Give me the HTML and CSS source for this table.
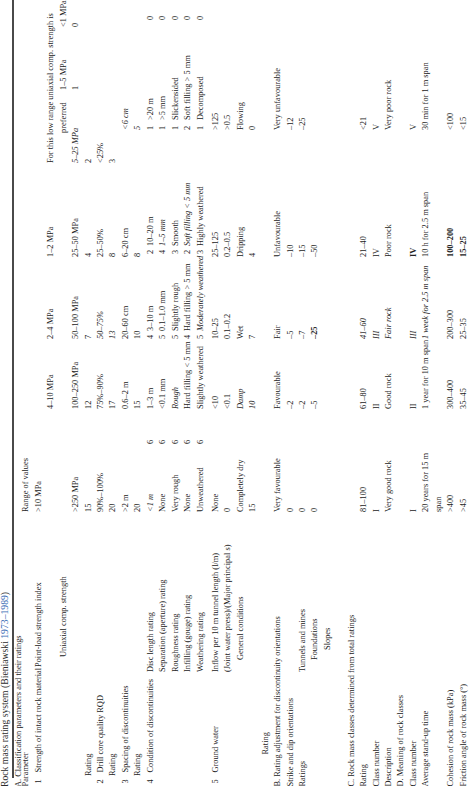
FILE: index.html
```html
<!DOCTYPE html>
<html lang="en">
<head>
<meta charset="utf-8">
<title>Rock mass rating system</title>
<link rel="stylesheet" href="styles.css">
</head>
<body>
<div class="page">
  <div class="title">Rock mass rating system (Bieniawski <span class="cite">1973–1989</span>)</div>
  <div class="rule"></div>
  <div class="sec-a">A. Classification parameters and their ratings</div>
  <div class="rows">
    <div class="row"><span class="lab">Parameter</span><span class="c1">Range of values</span></div>
    <div class="row"><span class="num">1</span><span class="par">Strength of intact rock material</span><span class="sub pl">Point-load strength index</span><span class="c1">&gt;10 MPa</span></div>
    <div class="row"><span class="c2">4–10 MPa</span><span class="c3">2–4 MPa</span><span class="c4">1–2 MPa</span><span class="c5">For this low range uniaxial comp. strength is</span></div>
    <div class="row"><span class="sub uni">Uniaxial comp. strength</span><span class="c5b pref">preferred</span><span class="c6">1–5 MPa</span><span class="c7">&lt;1 MPa</span></div>
    <div class="row"><span class="c1">&gt;250 MPa</span><span class="c2">100–250 MPa</span><span class="c3">50–100 MPa</span><span class="c4">25–50 MPa</span><span class="c5"><i>5–25 MPa</i></span><span class="c6">1</span><span class="c7">0</span></div>
    <div class="row"><span class="lab ind">Rating</span><span class="c1">15</span><span class="c2">12</span><span class="c3">7</span><span class="c4">4</span><span class="c5">2</span></div>
    <div class="row"><span class="num">2</span><span class="par">Drill core quality RQD</span><span class="c1">90%–100%</span><span class="c2">75%–90%</span><span class="c3"><i>50–75%</i></span><span class="c4">25–50%</span><span class="c5">&lt;25%</span></div>
    <div class="row"><span class="lab ind">Rating</span><span class="c1">20</span><span class="c2">17</span><span class="c3"><i>13</i></span><span class="c4">8</span><span class="c5">3</span></div>
    <div class="row"><span class="num">3</span><span class="par">Spacing of discontinuities</span><span class="c1">&gt;2 m</span><span class="c2">0.6–2 m</span><span class="c3">20–60 cm</span><span class="c4">6–20 cm</span><span class="c5b"><i>&lt;6 cm</i></span></div>
    <div class="row"><span class="lab ind">Rating</span><span class="c1">20</span><span class="c2">15</span><span class="c3">10</span><span class="c4">8</span><span class="c5b"><i>5</i></span></div>
    <div class="row cond"><span class="num">4</span><span class="par">Condition of discontinuities</span><span class="sub">Disc length rating</span><span class="c1"><i>&lt;1 m</i></span><span class="r1">6</span><span class="c2">1–3 m</span><span class="c3"><span class="rt">4</span>3–10 m</span><span class="c4"><span class="rt">2</span>10–20 m</span><span class="c5b"><span class="rt">1</span>&gt;20 m</span><span class="c7">0</span></div>
    <div class="row cond"><span class="sub">Separation (aperture) rating</span><span class="c1">None</span><span class="r1">6</span><span class="c2">&lt;0.1 mm</span><span class="c3"><span class="rt">5</span>0.1–1.0 mm</span><span class="c4"><span class="rt">4</span><i>1–5 mm</i></span><span class="c5b"><span class="rt">1</span>&gt;5 mm</span><span class="c7">0</span></div>
    <div class="row cond"><span class="sub">Roughness rating</span><span class="c1">Very rough</span><span class="r1">6</span><span class="c2"><i>Rough</i></span><span class="c3"><span class="rt">5</span>Slightly rough</span><span class="c4"><span class="rt">3</span>Smooth</span><span class="c5b"><span class="rt">1</span>Slickensided</span><span class="c7">0</span></div>
    <div class="row cond"><span class="sub">Infilling (gouge) rating</span><span class="c1">None</span><span class="r1">6</span><span class="c2">Hard filling &lt; 5 mm</span><span class="c3"><span class="rt">4</span>Hard filling &gt; 5 mm</span><span class="c4"><span class="rt">2</span><i>Soft filling &lt; 5 mm</i></span><span class="c5b"><span class="rt">2</span>Soft filling &gt; 5 mm</span><span class="c7">0</span></div>
    <div class="row cond"><span class="sub">Weathering rating</span><span class="c1">Unweathered</span><span class="r1">6</span><span class="c2">Slightly weathered</span><span class="c3"><span class="rt">5</span><i>Moderately weathered</i></span><span class="c4"><span class="rt">3</span>Highly weathered</span><span class="c5b"><span class="rt">1</span>Decomposed</span><span class="c7">0</span></div>
    <div class="row group"><span class="num">5</span><span class="par">Ground water</span><span class="sub">Inflow per 10 m tunnel length (l/m)</span><span class="c1">None</span><span class="c2">&lt;10</span><span class="c3">10–25</span><span class="c4">25–125</span><span class="c5b">&gt;125</span></div>
    <div class="row"><span class="sub">(Joint water press)/(Major principal s)</span><span class="c1">0</span><span class="c2">&lt;0.1</span><span class="c3">0.1–0.2</span><span class="c4">0.2–0.5</span><span class="c5b">&gt;0.5</span></div>
    <div class="row"><span class="sub gen">General conditions</span><span class="c1">Completely dry</span><span class="c2"><i>Damp</i></span><span class="c3">Wet</span><span class="c4">Dripping</span><span class="c5b">Flowing</span></div>
    <div class="row"><span class="c1">15</span><span class="c2"><i>10</i></span><span class="c3">7</span><span class="c4">4</span><span class="c5b">0</span></div>
    <div class="row"><span class="lab ind2">Rating</span></div>
    <div class="row"><span class="lab">B. Rating adjustment for discontinuity orientations</span><span class="c1">Very favourable</span><span class="c2">Favourable</span><span class="c3">Fair</span><span class="c4">Unfavourable</span><span class="c5b">Very unfavourable</span></div>
    <div class="row"><span class="lab">Strike and dip orientations</span><span class="c1">0</span><span class="c2">–2</span><span class="c3">–5</span><span class="c4">–10</span><span class="c5b">–12</span></div>
    <div class="row"><span class="lab">Ratings</span><span class="sub">Tunnels and mines</span><span class="c1">0</span><span class="c2">–2</span><span class="c3">–7</span><span class="c4">–15</span><span class="c5b">–25</span></div>
    <div class="row"><span class="sub fnd">Foundations</span><span class="c1">0</span><span class="c2">–5</span><span class="c3"><b>–25</b></span><span class="c4">–50</span></div>
    <div class="row"><span class="sub slp">Slopes</span></div>
    <div class="row gap"></div>
    <div class="row"><span class="lab">C. Rock mass classes determined from total ratings</span></div>
    <div class="row"><span class="lab">Rating</span><span class="c1">81–100</span><span class="c2">61–80</span><span class="c3"><i>41–60</i></span><span class="c4">21–40</span><span class="c5b">&lt;21</span></div>
    <div class="row"><span class="lab">Class number</span><span class="c1">I</span><span class="c2">II</span><span class="c3"><i>III</i></span><span class="c4">IV</span><span class="c5b">V</span></div>
    <div class="row"><span class="lab">Description</span><span class="c1">Very good rock</span><span class="c2">Good rock</span><span class="c3"><i>Fair rock</i></span><span class="c4">Poor rock</span><span class="c5b">Very poor rock</span></div>
    <div class="row"><span class="lab">D. Meaning of rock classes</span></div>
    <div class="row"><span class="lab">Class number</span><span class="c1">I</span><span class="c2">II</span><span class="c3"><i>III</i></span><span class="c4"><b>IV</b></span><span class="c5b">V</span></div>
    <div class="row"><span class="lab">Average stand-up time</span><span class="c1">20 years for 15 m</span><span class="c2">1 year for 10 m span</span><span class="c3"><i>1 week for 2.5 m span</i></span><span class="c4">10 h for 2.5 m span</span><span class="c5b">30 min for 1 m span</span></div>
    <div class="row"><span class="c1">span</span></div>
    <div class="row"><span class="lab">Cohesion of rock mass (kPa)</span><span class="c1">&gt;400</span><span class="c2">300–400</span><span class="c3">200–300</span><span class="c4"><b>100–200</b></span><span class="c5b">&lt;100</span></div>
    <div class="row"><span class="lab">Friction angle of rock mass (°)</span><span class="c1">&gt;45</span><span class="c2">35–45</span><span class="c3">25–35</span><span class="c4"><b>15–25</b></span><span class="c5b">&lt;15</span></div>
  </div>
</div>
</body>
</html>
```

FILE: styles.css
```css
html, body {
  margin: 0;
  padding: 0;
  background: #ffffff;
}

body {
  width: 474px;
  height: 786px;
  overflow: hidden;
}

/* The table is laid out in its own (landscape) orientation and the
   whole sheet is turned a quarter turn, as in the scanned figure. */
.page {
  width: 786px;
  height: 474px;
  overflow: hidden;
  transform-origin: 0 0;
  transform: translateY(786px) rotate(-90deg);
  background: #ffffff;
  color: #222222;
  font-family: "Liberation Serif", "Times New Roman", serif;
  font-size: 8.4px;
}

.title {
  height: 8px;
  line-height: 8px;
  margin-top: 0.5px;
  margin-left: -1px;
  font-size: 9.7px;
  white-space: nowrap;
  color: #2b2b2b;
}

.cite {
  color: #3a6db5;
}

.rule {
  margin-top: 3.5px;
  margin-left: 8px;
  height: 0;
  border-top: 2px solid #4a4a4a;
}

.sec-a {
  height: 8px;
  line-height: 8px;
  margin-top: 0.7px;
  margin-left: -1px;
  white-space: nowrap;
}

.rows {
  margin-top: -2.3px;
}

.row {
  display: grid;
  grid-template-columns:
    [num] 13.5px [par] 100.5px [sub] 160px [c1] 68px [r1] 35px
    [c2] 70px [c3] 82px [c4] 94px [c5] 33px [c5b] 40px [c6] 63px [c7] 27px [end];
  height: 12.44px;
  line-height: 12.44px;
  white-space: nowrap;
}

.row.group {
  margin-top: 3px;
}

.row.gap {
  height: 11.4px;
}

.row > * {
  grid-row: 1;
  min-width: 0;
}

.num { grid-column: num / par; padding-left: 2.5px; }
.par { grid-column: par / sub; }
.sub { grid-column: sub / c1; }
.lab { grid-column: num / c1; margin-left: -0.5px; }
.c1 { grid-column: c1 / r1; }
.r1 { grid-column: r1 / c2; }
.c2 { grid-column: c2 / c3; }
.c3 { grid-column: c3 / c4; }
.c4 { grid-column: c4 / c5; }
.c5 { grid-column: c5 / c5b; }
.c5b { grid-column: c5b / c6; }
.c6 { grid-column: c6 / c7; }
.c7 { grid-column: c7 / end; }

.lab.ind { padding-left: 10.5px; }
.lab.ind2 { padding-left: 32px; }

.sub.pl { padding-left: 5px; }
.sub.uni { padding-left: 15px; }
.sub.gen { padding-left: 12px; }
.sub.fnd { padding-left: 12px; }
.sub.slp { padding-left: 22px; }

.c5b.pref { margin-left: -3px; }

/* condition-of-discontinuity rows: a rating figure precedes each value */
.rt {
  display: inline-block;
  width: 8px;
}

.cond .c4 { padding-left: 3px; }
.cond .c5b .rt { width: 10px; }
.cond .c7 { padding-left: 7px; }
```
